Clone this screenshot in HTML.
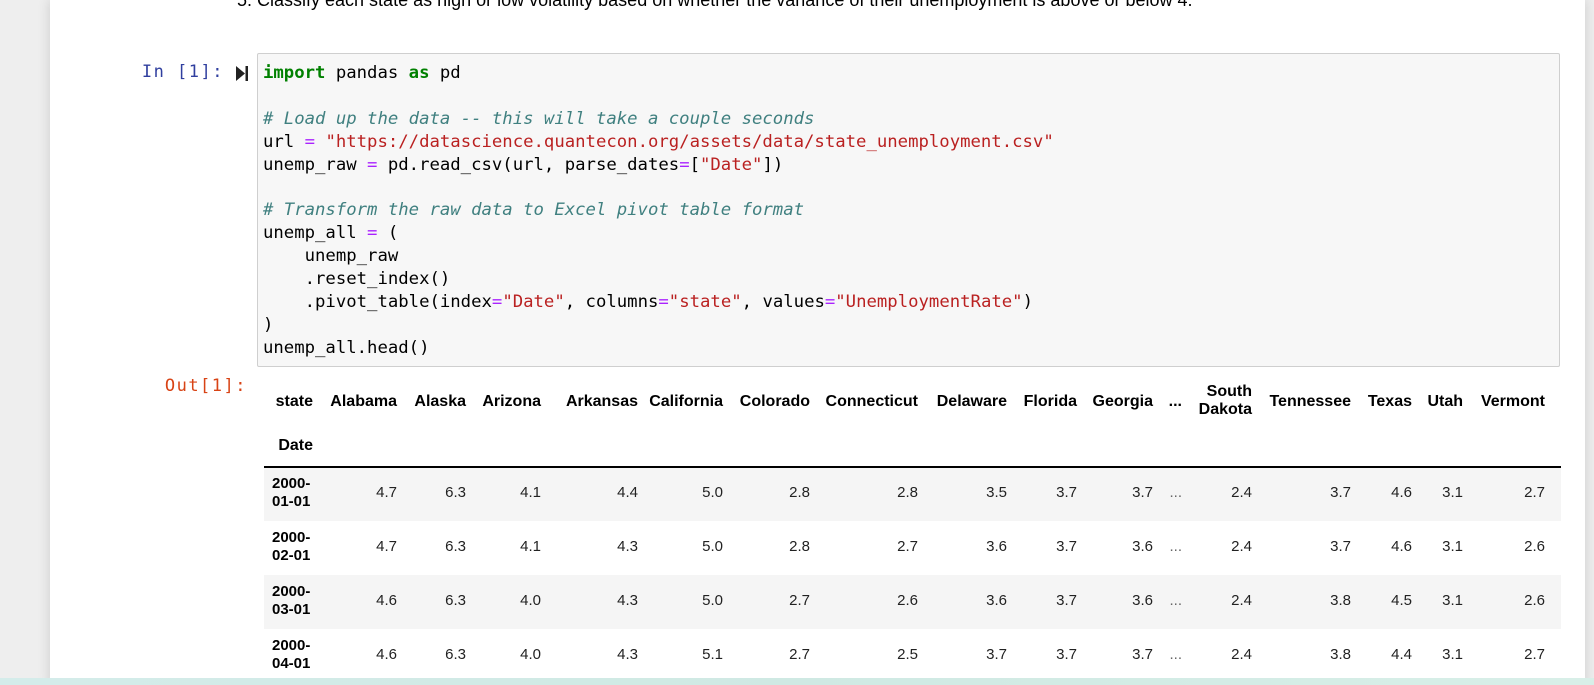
<!DOCTYPE html>
<html><head><meta charset="utf-8"><style>
*{margin:0;padding:0;box-sizing:border-box}
body{width:1594px;height:685px;overflow:hidden;background:#eeeeee;font-family:"Liberation Sans",Arial,sans-serif;position:relative}
#page{position:absolute;left:50px;top:0;width:1535px;height:685px;background:#fff;box-shadow:0 0 12px rgba(0,0,0,.15)}
.abs{position:absolute;white-space:pre}
#top{left:237px;top:-10px;font-size:18px;color:#000}
.prompt{font-family:"DejaVu Sans Mono","Liberation Mono",monospace;font-size:17px;text-align:right;width:140px;letter-spacing:1.5px}
#code{position:absolute;left:257px;top:53px;width:1303px;height:314px;background:#f7f7f7;border:1px solid #cfcfcf;border-radius:2px}
#code pre{position:absolute;left:5px;top:8px;font-family:"DejaVu Sans Mono","Liberation Mono",monospace;font-size:17.3px;line-height:22.9px;color:#000}
.k{color:#008000;font-weight:bold}.c{color:#408080;font-style:italic}.s{color:#ba2121}.o{color:#aa22ff}
.h{position:absolute;font-weight:bold;font-size:16px;color:#000;text-align:right;white-space:nowrap}
.n{position:absolute;font-size:15px;color:#222;text-align:right;white-space:nowrap}
.row{position:absolute;left:264px;width:1297px}
.dt{position:absolute;left:272px;font-weight:bold;font-size:15px;line-height:18px}
#strip{position:absolute;left:0;top:678px;width:1594px;height:7px;background:linear-gradient(90deg,#d4ecea,#cfe9e3 50%,#d8efe8)}
</style></head><body>
<div id="page"></div>
<div class="abs" id="top">5. Classify each state as high or low volatility based on whether the variance of their unemployment is above or below 4.</div>
<div class="abs prompt" style="left:84px;top:62px;color:#303f9f">In [1]:</div>
<svg style="position:absolute;left:235px;top:65px" width="14" height="17"><polygon points="1,1 10,8.5 1,16" fill="#222"/><rect x="10.5" y="1" width="2.5" height="15" fill="#222"/></svg>
<div id="code"><pre><span class="k">import</span> pandas <span class="k">as</span> pd

<span class="c"># Load up the data -- this will take a couple seconds</span>
url <span class="o">=</span> <span class="s">"https://datascience.quantecon.org/assets/data/state_unemployment.csv"</span>
unemp_raw <span class="o">=</span> pd.read_csv(url, parse_dates<span class="o">=</span>[<span class="s">"Date"</span>])

<span class="c"># Transform the raw data to Excel pivot table format</span>
unemp_all <span class="o">=</span> (
    unemp_raw
    .reset_index()
    .pivot_table(index<span class="o">=</span><span class="s">"Date"</span>, columns<span class="o">=</span><span class="s">"state"</span>, values<span class="o">=</span><span class="s">"UnemploymentRate"</span>)
)
unemp_all.head()</pre></div>
<div class="abs prompt" style="left:107px;top:376px;color:#d84315">Out[1]:</div>
<div class="row" style="top:466px;height:2px;background:#000"></div>
<div class="row" style="top:468px;height:53px;background:#f5f5f5"></div>
<div class="row" style="top:575px;height:54px;background:#f5f5f5"></div>
<div id="strip"></div>
<script>
var R=[313,397,466,541,638,723,810,918,1007,1077,1153,1182,1252,1351,1412,1463,1545];
var H=["state","Alabama","Alaska","Arizona","Arkansas","California","Colorado","Connecticut","Delaware","Florida","Georgia","...","","Tennessee","Texas","Utah","Vermont"];
var D=[["4.7","6.3","4.1","4.4","5.0","2.8","2.8","3.5","3.7","3.7","...","2.4","3.7","4.6","3.1","2.7"],
["4.7","6.3","4.1","4.3","5.0","2.8","2.7","3.6","3.7","3.6","...","2.4","3.7","4.6","3.1","2.6"],
["4.6","6.3","4.0","4.3","5.0","2.7","2.6","3.6","3.7","3.6","...","2.4","3.8","4.5","3.1","2.6"],
["4.6","6.3","4.0","4.3","5.1","2.7","2.5","3.7","3.7","3.7","...","2.4","3.8","4.4","3.1","2.7"]];
var out="";
for(var i=0;i<H.length;i++){if(H[i])out+='<div class="h" style="right:'+(1594-R[i])+'px;top:393px">'+H[i]+'</div>';}
out+='<div class="h" style="right:'+(1594-R[12])+'px;top:383px;line-height:18px">South<br>Dakota</div>';
out+='<div class="h" style="right:'+(1594-R[0])+'px;top:437px">Date</div>';
var ys=[493,547,601,655],dates=["01","02","03","04"];
for(var r=0;r<4;r++){out+='<div class="dt" style="top:'+(ys[r]-18)+'px">2000-<br>'+dates[r]+'-01</div>';
for(var c=0;c<16;c++){var v=D[r][c];out+='<div class="n" style="right:'+(1594-R[c+1])+'px;top:'+(ys[r]-9)+'px;'+(v=="..."?"color:#666;":"")+'">'+v+'</div>';}}
document.write(out);
</script>
</body></html>
